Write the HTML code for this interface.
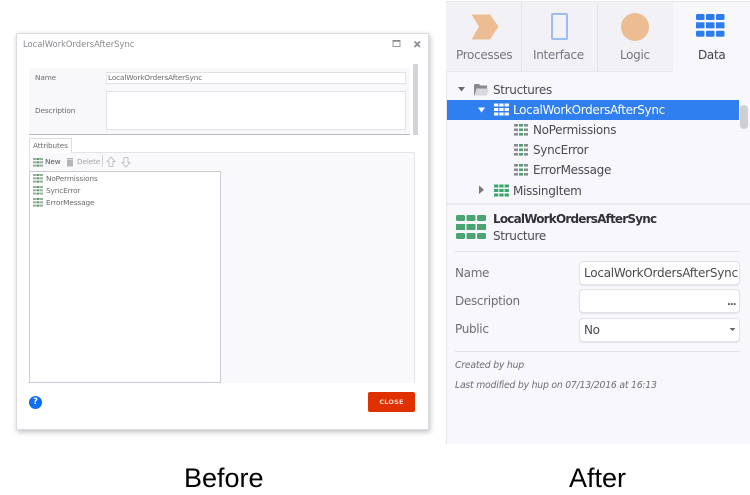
<!DOCTYPE html>
<html><head><meta charset="utf-8"><style>
html,body{margin:0;padding:0;background:#fff}
#p{position:relative;width:750px;height:495px;overflow:hidden;background:#fff;font-family:"DejaVu Sans",sans-serif}
#p div,#p svg,#p span{position:absolute;box-sizing:border-box}
.t{white-space:nowrap;line-height:1}
.a{font-size:12px;letter-spacing:-.32px;color:#4a4a4f}
.s{font-size:7.3px;color:#6a6a6e;letter-spacing:-.12px}
.i{border:1px solid #e2e2e6;border-radius:4px;background:#fff;box-shadow:0 1px 1px #e4e4ea}
</style></head><body><div id="p">
<svg width="0" height="0" style="left:0;top:0"><defs>
<g id="ic"><g fill="#8c8c90"><rect x="0" y="0" width="4" height="2.600"/><rect x="0" y="4.500" width="4" height="2.600"/><rect x="0" y="9" width="4" height="2.600"/><rect x="10" y="0" width="4" height="2.600"/><rect x="10" y="4.500" width="4" height="2.600"/><rect x="10" y="9" width="4" height="2.600"/></g><g fill="#4aa56c"><rect x="5" y="0" width="4" height="2.600"/><rect x="5" y="4.500" width="4" height="2.600"/><rect x="5" y="9" width="4" height="2.600"/></g></g>
<g id="ics"><g fill="#a4a8a4"><rect x="0" y="0" width="3" height="2"/><rect x="0" y="3.300" width="3" height="2"/><rect x="0" y="6.600" width="3" height="2"/><rect x="7" y="0" width="3" height="2"/><rect x="7" y="3.300" width="3" height="2"/><rect x="7" y="6.600" width="3" height="2"/></g><g fill="#4aa560"><rect x="3.500" y="0" width="3" height="2"/><rect x="3.500" y="3.300" width="3" height="2"/><rect x="3.500" y="6.600" width="3" height="2"/></g></g>
</defs></svg>

<!-- Before: dialog -->
<div style="left:16px;top:33px;width:413px;height:397px;background:#fff;border:1px solid #dcdce0;box-shadow:1px 2px 5px rgba(90,90,100,.4)"></div>
<div class="t" style="left:23px;top:40px;font-size:8.400px;color:#8a8a90">LocalWorkOrdersAfterSync</div>
<svg style="left:392px;top:39px" width="9" height="9"><path d="M1 1.500H8V7.500H1Z" fill="none" stroke="#9a9aa0"/><path d="M1 2H8" stroke="#808088" stroke-width="1.400"/></svg>
<svg style="left:413px;top:40px" width="9" height="9"><path d="M1.500 1.500L7 7M7 1.500L1.500 7" stroke="#8c8c94" stroke-width="1.800"/></svg>

<div style="left:29px;top:68px;width:381px;height:67px;background:#f8f7f9;border-bottom:1px solid #b9b7bd"></div>
<div class="t s" style="left:35px;top:74px">Name</div>
<div style="left:106px;top:72px;width:300px;height:12px;background:#fff;border:1px solid #e3e2e6"></div>
<div class="t s" style="left:108px;top:74px">LocalWorkOrdersAfterSync</div>
<div class="t s" style="left:35px;top:107px">Description</div>
<div style="left:106px;top:91px;width:300px;height:39px;background:#fff;border:1px solid #e3e2e6"></div>
<div style="left:413px;top:64px;width:5px;height:71px;background:#d0d5da"></div>

<div style="left:29px;top:152px;width:386px;height:231px;background:#f9f8fa;border:1px solid #e4e3e7;border-bottom:0"></div>
<div style="left:29px;top:138px;width:43px;height:15px;background:#fff;border:1px solid #dddce0;border-bottom:0"></div>
<div class="t s" style="left:33px;top:142px">Attributes</div>
<div style="left:29px;top:171px;width:192px;height:212px;background:#fff;border:1px solid #c8ccd4"></div>

<svg style="left:33px;top:158px" width="10" height="9"><use href="#ics"/></svg>
<div class="t s" style="left:45px;top:158px;color:#55555a">New</div>
<svg style="left:66px;top:157px" width="8" height="10"><path d="M1 1.500H7M1.500 3V9H6.500V3Z" fill="#b5b5b8" stroke="#b5b5b8"/></svg>
<div class="t s" style="left:77px;top:158px;color:#a4a4a8">Delete</div>
<div style="left:102px;top:155px;width:1px;height:12px;background:#d2d2d6"></div>
<svg style="left:106px;top:156px" width="10" height="12"><path d="M5 1L9 5.500H7V10.500H3V5.500H1Z" fill="none" stroke="#c4c4c8"/></svg>
<svg style="left:121px;top:156px" width="10" height="12"><path d="M5 11L9 6.500H7V1.500H3V6.500H1Z" fill="none" stroke="#c4c4c8"/></svg>

<svg style="left:33px;top:174px" width="10" height="9"><use href="#ics"/></svg>
<div class="t s" style="left:46px;top:175px">NoPermissions</div>
<svg style="left:33px;top:186px" width="10" height="9"><use href="#ics"/></svg>
<div class="t s" style="left:46px;top:187px">SyncError</div>
<svg style="left:33px;top:198px" width="10" height="9"><use href="#ics"/></svg>
<div class="t s" style="left:46px;top:199px">ErrorMessage</div>

<div style="left:29px;top:396px;width:13px;height:13px;border-radius:50%;background:#0d6ef0"></div>
<div class="t" style="left:29px;top:398px;width:13px;text-align:center;font-size:8.500px;font-weight:bold;color:#fff">?</div>
<div style="left:368px;top:392px;width:47px;height:20px;border-radius:2px;background:#e03000"></div>
<div class="t" style="left:368px;top:399px;width:47px;text-align:center;font-size:6.500px;font-weight:bold;color:#f6d8cc;letter-spacing:.2px">CLOSE</div>

<div class="t" style="left:184px;top:465px;font:27px/1 'Liberation Sans',sans-serif;color:#000">Before</div>

<!-- After panel -->
<div style="left:446px;top:1px;width:304px;height:443px;background:#f7f7fc;border-left:1px solid #e6e6ea"></div>
<div style="left:446px;top:1px;width:227px;height:71px;background:#f2f1f5;border-bottom:1px solid #e8e8ec"></div>
<div style="left:521px;top:1px;width:1px;height:71px;background:#e4e4e8"></div>
<div style="left:597px;top:1px;width:1px;height:71px;background:#e4e4e8"></div>
<div style="left:446px;top:1px;width:304px;height:1px;background:#eaeaee"></div>

<svg style="left:471px;top:14px" width="28" height="26"><path d="M0.500 0.500H19L27.500 12.500L19 25.500H0.500L8 12.500Z" fill="#ecbd92"/></svg>
<div style="left:551px;top:13px;width:17px;height:27px;border:2px solid #9dbdf0;border-radius:2px;background:#f2f1f5"></div>
<div style="left:621px;top:13px;width:28px;height:28px;border-radius:50%;background:#ecbd92"></div>
<svg style="left:696px;top:14px" width="29" height="23"><g fill="#2d7cee"><rect x="0" y="0" width="8.500" height="6" rx="1.500"/><rect x="10" y="0" width="8.500" height="6" rx="1"/><rect x="20" y="0" width="8.500" height="6" rx="1.500"/><rect x="0" y="8.300" width="8.500" height="6"/><rect x="10" y="8.300" width="8.500" height="6"/><rect x="20" y="8.300" width="8.500" height="6"/><rect x="0" y="16.700" width="8.500" height="6" rx="1.500"/><rect x="10" y="16.700" width="8.500" height="6" rx="1"/><rect x="20" y="16.700" width="8.500" height="6" rx="1.500"/></g></svg>

<div class="t a" style="left:456px;top:49px;color:#77777c">Processes</div>
<div class="t a" style="left:533px;top:49px;color:#77777c">Interface</div>
<div class="t a" style="left:620px;top:49px;color:#77777c">Logic</div>
<div class="t a" style="left:698px;top:49px;color:#444448">Data</div>

<!-- tree -->
<svg style="left:457px;top:85px" width="9" height="8"><path d="M1 2H8L4.500 6.500Z" fill="#6a6a6e"/></svg>
<svg style="left:473px;top:83px" width="16" height="14"><path d="M1 2.500Q1 1 2.500 1H6L7.500 2.500H14V12.500H1Z" fill="#8a8a8e"/><path d="M1.500 12.500L3.500 5.500H15.500L14 12.500Z" fill="#d8d8dc"/></svg>
<div class="t a" style="left:493px;top:84px">Structures</div>

<div style="left:447px;top:100px;width:292px;height:20px;background:#2f7ff0"></div>
<svg style="left:477px;top:106px" width="9" height="8"><path d="M1 1.500H8L4.500 6.500Z" fill="#fff"/></svg>
<svg style="left:494px;top:103px" width="15" height="13"><path d="M0 2H15M0 6.500H15M0 11H15" stroke="#fff" stroke-width="3" stroke-dasharray="4.300 1"/></svg>
<div class="t a" style="left:513px;top:104px;color:#fff">LocalWorkOrdersAfterSync</div>
<div style="left:740px;top:105px;width:8px;height:24px;border-radius:4px;background:#cfcfd3"></div>

<svg style="left:514px;top:124px" width="15" height="12"><use href="#ic"/></svg>
<div class="t a" style="left:533px;top:124px">NoPermissions</div>
<svg style="left:514px;top:144px" width="15" height="12"><use href="#ic"/></svg>
<div class="t a" style="left:533px;top:144px">SyncError</div>
<svg style="left:514px;top:164px" width="15" height="12"><use href="#ic"/></svg>
<div class="t a" style="left:533px;top:164px">ErrorMessage</div>

<svg style="left:478px;top:185px" width="7" height="10"><path d="M1 .5V9L6 4.800Z" fill="#77777c"/></svg>
<svg style="left:494px;top:184px" width="15" height="13"><path d="M0 2H15M0 6.500H15M0 11H15" stroke="#3aa56c" stroke-width="3" stroke-dasharray="4.300 1"/></svg>
<div class="t a" style="left:513px;top:185px">MissingItem</div>

<div style="left:447px;top:203px;width:303px;height:2px;background:#ebebef"></div>
<svg style="left:456px;top:215px" width="30" height="24"><g fill="#4aa572"><rect x="0" y="0" width="9" height="6" rx="1.500"/><rect x="10.500" y="0" width="9" height="6" rx="1"/><rect x="21" y="0" width="9" height="6" rx="1.500"/><rect x="0" y="9" width="9" height="6"/><rect x="10.500" y="9" width="9" height="6"/><rect x="21" y="9" width="9" height="6"/><rect x="0" y="18" width="9" height="6" rx="1.500"/><rect x="10.500" y="18" width="9" height="6" rx="1"/><rect x="21" y="18" width="9" height="6" rx="1.500"/></g></svg>
<div class="t" style="left:493px;top:213px;font-size:12px;font-weight:bold;letter-spacing:-.8px;color:#333337">LocalWorkOrdersAfterSync</div>
<div class="t a" style="left:493px;top:230px">Structure</div>

<div style="left:455px;top:251px;width:285px;height:1px;background:#e3e3e8"></div>
<div class="t a" style="left:455px;top:267px;color:#6e6e73">Name</div>
<div class="t a" style="left:455px;top:295px;color:#6e6e73">Description</div>
<div class="t a" style="left:455px;top:323px;color:#6e6e73">Public</div>

<div class="i" style="left:579px;top:261px;width:161px;height:24px"></div>
<div style="left:584px;top:262px;width:154px;height:22px;overflow:hidden"><span class="t a" style="left:0;top:5px;letter-spacing:-.24px">LocalWorkOrdersAfterSync</span></div>
<div class="i" style="left:579px;top:289px;width:161px;height:24px"></div>
<div class="t" style="left:727px;top:298px;font-size:10px;font-weight:bold;color:#55555a;letter-spacing:-.9px">...</div>
<div class="i" style="left:579px;top:318px;width:161px;height:24px"></div>
<div class="t a" style="left:584px;top:324px">No</div>
<svg style="left:729px;top:327px" width="7" height="5"><path d="M.5 1H6.500L3.500 4Z" fill="#66666a"/></svg>

<div style="left:455px;top:351px;width:285px;height:1px;background:#e3e3e8"></div>
<div class="t" style="left:455px;top:361px;font-size:9.300px;font-style:italic;letter-spacing:-.22px;color:#6e6e73">Created by hup</div>
<div class="t" style="left:455px;top:381px;font-size:9.300px;font-style:italic;letter-spacing:-.22px;color:#6e6e73">Last modified by hup on 07/13/2016 at 16:13</div>

<div class="t" style="left:569px;top:465px;font:27px/1 'Liberation Sans',sans-serif;color:#000">After</div>
</div></body></html>
